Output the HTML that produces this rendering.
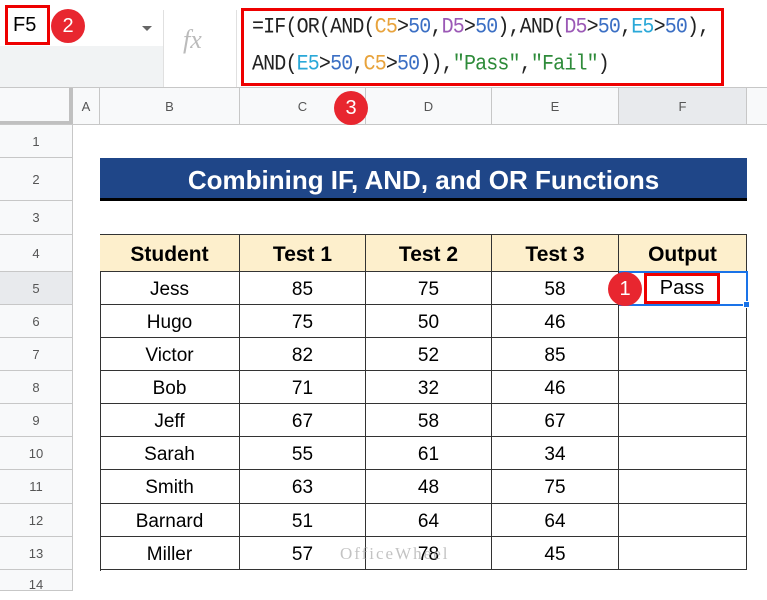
<!DOCTYPE html>
<html><head><style>
*{margin:0;padding:0;box-sizing:border-box}
body{width:767px;height:591px;overflow:hidden;background:#fff;font-family:"Liberation Sans",Arial,sans-serif;position:relative}
.a{position:absolute}
.ch{position:absolute;top:88px;height:37px;border-right:1px solid #c7c7c7;color:#555;font-size:13px;text-align:center;line-height:37px;background:#f8f9fa}
.rh{position:absolute;left:0;width:73px;border-bottom:1px solid #c7c7c7;color:#555;font-size:13px;text-align:center;background:#f8f9fa;border-right:1px solid #c7c7c7}
.c{position:absolute;border-right:1.5px solid #333;border-bottom:1.5px solid #333;text-align:center;font-size:19px;color:#000}
.badge{position:absolute;width:34px;height:34px;border-radius:50%;background:#e8262f;color:#fff;font-size:20px;text-align:center;line-height:34px}
.f{font-family:"Liberation Mono","DejaVu Sans Mono",monospace;font-size:20px;letter-spacing:-0.85px;position:absolute;left:252px;white-space:nowrap;color:#222;transform:scaleY(1.1);transform-origin:left top}
</style></head><body>
<div class="a" style="left:0;top:46px;width:163px;height:42px;background:#f1f3f4"></div>
<div class="a" style="left:163px;top:10px;width:1px;height:78px;background:#e0e0e0"></div>
<div class="a" style="left:5px;top:5px;width:45px;height:40px;border:3px solid #e00;font-size:20px;line-height:34px;padding-left:5px">F5</div>
<div class="badge" style="left:51px;top:9px">2</div>
<div class="a" style="left:142px;top:26px;border-left:5px solid transparent;border-right:5px solid transparent;border-top:5px solid #666"></div>
<div class="a" style="left:183px;top:25px;font-family:'Liberation Serif',serif;font-style:italic;font-size:26px;color:#bbb">fx</div>
<div class="a" style="left:236px;top:10px;width:1px;height:78px;background:#e0e0e0"></div>
<div class="a" style="left:241px;top:8px;width:483px;height:78px;border:3px solid #e00"></div>
<div class="f" style="top:15px">=IF(OR(AND(<span style="color:#e8a33c">C5</span>&gt;<span style="color:#3b6fc4">50</span>,<span style="color:#9b59b6">D5</span>&gt;<span style="color:#3b6fc4">50</span>),AND(<span style="color:#9b59b6">D5</span>&gt;<span style="color:#3b6fc4">50</span>,<span style="color:#2aa8d8">E5</span>&gt;<span style="color:#3b6fc4">50</span>),</div>
<div class="f" style="top:52px">AND(<span style="color:#2aa8d8">E5</span>&gt;<span style="color:#3b6fc4">50</span>,<span style="color:#e8a33c">C5</span>&gt;<span style="color:#3b6fc4">50</span>)),<span style="color:#2e8b3a">"Pass"</span>,<span style="color:#2e8b3a">"Fail"</span>)</div>
<div class="a" style="left:0;top:87px;width:767px;height:1px;background:#c7c7c7"></div>
<div class="ch" style="left:0;width:73px;border-right:4px solid #c0c0c0;border-bottom:4px solid #c0c0c0"></div>
<div class="ch" style="left:73px;width:27px">A</div>
<div class="ch" style="left:100px;width:140px">B</div>
<div class="ch" style="left:240px;width:126px">C</div>
<div class="ch" style="left:366px;width:126px">D</div>
<div class="ch" style="left:492px;width:127px">E</div>
<div class="ch" style="left:619px;width:128px;background:#e8eaed">F</div>
<div class="ch" style="left:747px;width:30px"></div>
<div class="a" style="left:0;top:124px;width:767px;height:1px;background:#c7c7c7"></div>
<div class="badge" style="left:334px;top:91px">3</div>
<div class="rh" style="top:125px;height:33px;line-height:33px">1</div>
<div class="rh" style="top:158px;height:43px;line-height:43px">2</div>
<div class="rh" style="top:201px;height:34px;line-height:34px">3</div>
<div class="rh" style="top:235px;height:37px;line-height:37px">4</div>
<div class="rh" style="top:272px;height:33px;line-height:33px;background:#e8eaed">5</div>
<div class="rh" style="top:305px;height:33px;line-height:33px">6</div>
<div class="rh" style="top:338px;height:33px;line-height:33px">7</div>
<div class="rh" style="top:371px;height:33px;line-height:33px">8</div>
<div class="rh" style="top:404px;height:33px;line-height:33px">9</div>
<div class="rh" style="top:437px;height:33px;line-height:33px">10</div>
<div class="rh" style="top:470px;height:34px;line-height:34px">11</div>
<div class="rh" style="top:504px;height:33px;line-height:33px">12</div>
<div class="rh" style="top:537px;height:33px;line-height:33px">13</div>
<div class="rh" style="top:570px;height:21px;line-height:30px">14</div>
<div class="a" style="left:100px;top:158px;width:647px;height:43px;background:#1f4688;border-bottom:3px solid #000;color:#fff;font-weight:bold;font-size:26px;text-align:center;line-height:44px">Combining IF, AND, and OR Functions</div>
<div class="a" style="left:100px;top:234px;width:647px;height:337px;border-left:1.5px solid #333;border-top:1.5px solid #333"></div>
<div id="t"></div>
<script>
var cols=[[100,140],[240,126],[366,126],[492,127],[619,128]];
var rows=[["Student","Test 1","Test 2","Test 3","Output"],["Jess",85,75,58,""],["Hugo",75,50,46,""],["Victor",82,52,85,""],["Bob",71,32,46,""],["Jeff",67,58,67,""],["Sarah",55,61,34,""],["Smith",63,48,75,""],["Barnard",51,64,64,""],["Miller",57,78,45,""]];
var ys=[235,272,305,338,371,404,437,470,504,537,570];var h="";
for(var r=0;r<rows.length;r++)for(var c=0;c<5;c++){var y=ys[r],hh=ys[r+1]-y;
h+='<div class="c" style="left:'+cols[c][0]+'px;top:'+y+'px;width:'+cols[c][1]+'px;height:'+hh+'px;line-height:'+(hh+2)+'px;'+(r==0?'background:#fdefcc;font-weight:bold;font-size:21px':'')+'">'+rows[r][c]+'</div>';}
document.getElementById('t').innerHTML=h;
</script>
<div class="a" style="left:619px;top:271px;width:129px;height:35px;border:2px solid #1a73e8"></div>
<div class="a" style="left:743px;top:301px;width:7px;height:7px;background:#1a73e8;border:1px solid #fff"></div>
<div class="a" style="left:644px;top:273px;width:76px;height:31px;border:3px solid #e00;background:#fff;font-size:20px;text-align:center;line-height:25px">Pass</div>
<div class="badge" style="left:608px;top:272px">1</div>
<div class="a" style="left:310px;top:538px;width:140px;height:32px;color:#aaa;font-family:'Liberation Serif',serif;font-size:17px;letter-spacing:2px;line-height:32px;opacity:.7;padding-left:30px">OfficeWheel</div>
</body></html>
